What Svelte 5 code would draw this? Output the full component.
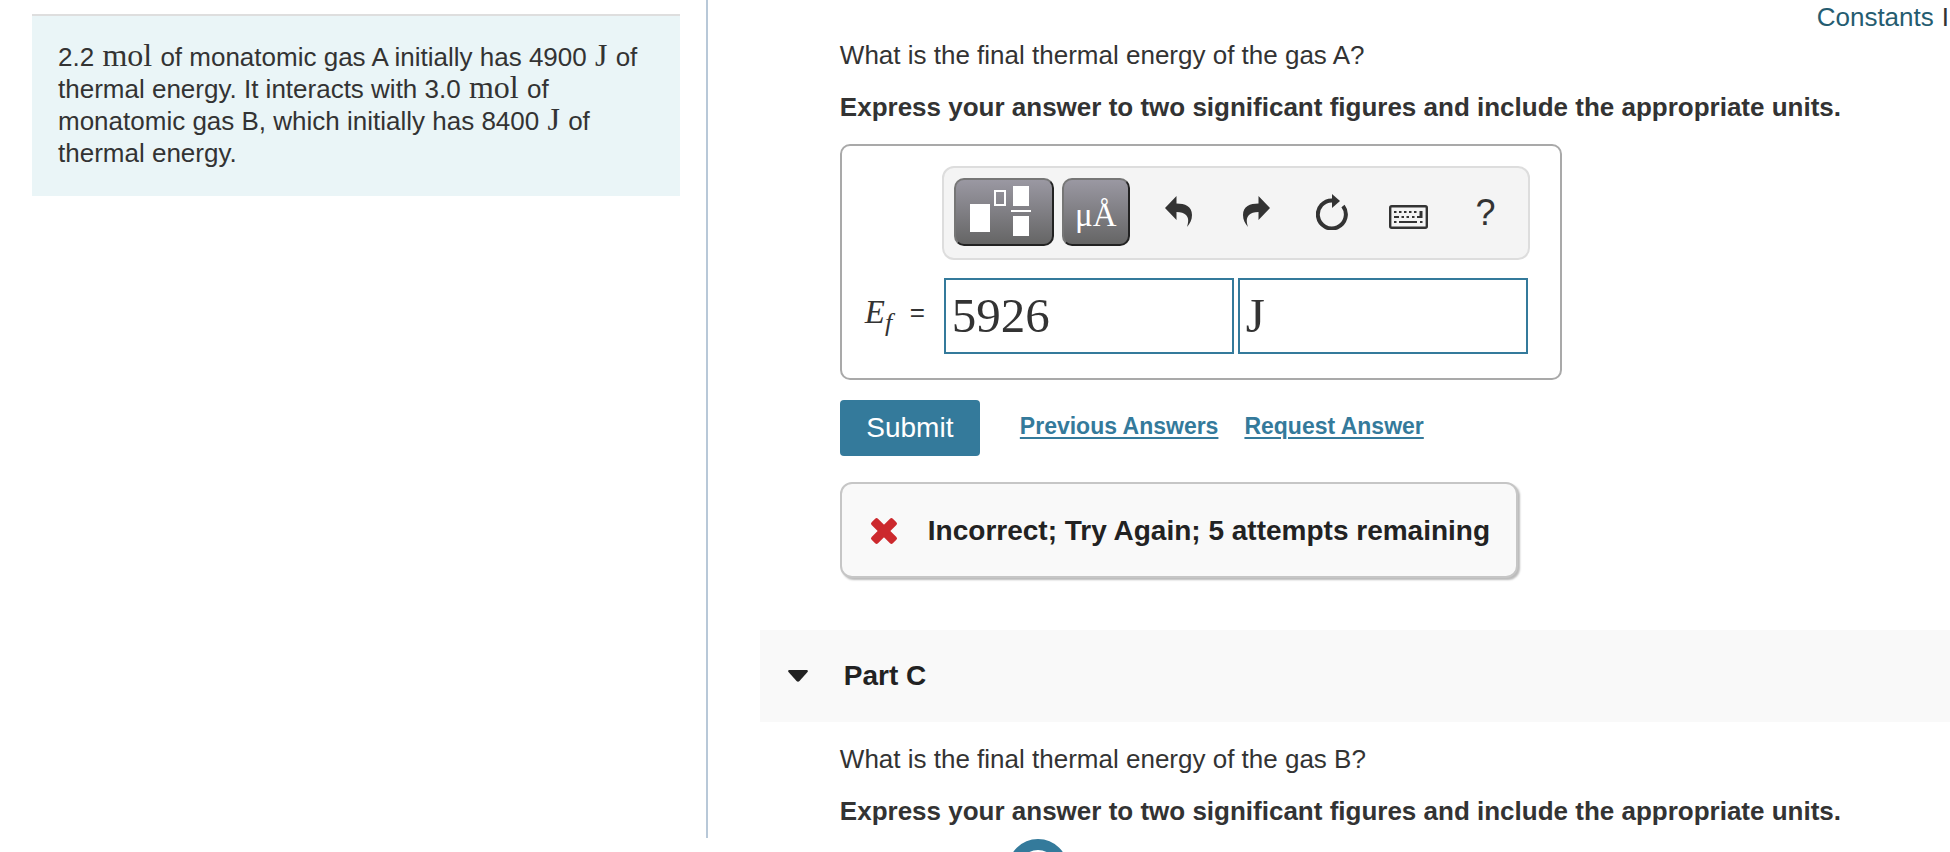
<script>
  let value = $state('5926');
  let units = $state('J');
  const instruction = 'Express your answer to two significant figures and include the appropriate units.';
</script>

<main class="page">
  <aside class="side">
    <p class="problem">
      2.2 <span class="math">mol</span> of monatomic gas A initially has 4900 <span class="math">J</span> of
      thermal energy. It interacts with 3.0 <span class="math">mol</span> of monatomic gas B, which
      initially has 8400 <span class="math">J</span> of thermal energy.
    </p>
  </aside>

  <section class="work">
    <nav class="top"><a href="#constants">Constants</a><span>I</span></nav>

    <div class="part">
      <p>What is the final thermal energy of the gas A?</p>
      <p class="strong">{instruction}</p>

      <form class="answer" onsubmit={(e) => e.preventDefault()}>
        <div class="toolbar">
          <button type="button" class="key wide" aria-label="Templates">
            <svg width="96" height="64" viewBox="0 0 96 64">
              <path fill="#fff" d="M14 24h20v28H14zM57 6h16v20H57zM55 30h20v2H55zM57 36h16v20H57z" />
              <path fill="none" stroke="#fff" stroke-width="2" d="M39 11h10v14H39z" />
            </svg>
          </button>
          <button type="button" class="key units">μÅ</button>
          <div class="tools">
            <button type="button" class="tool" aria-label="Undo">
              <svg width="28" height="32" viewBox="0 0 28 32">
                <path fill="#333" d="M0 12 11.500 0v7.500C20 7.500 27 10 27 19c0 5-2 8-5 12 1.500-5 2-9-1-12-2-2-5-3-9.500-3v8z" />
              </svg>
            </button>
            <button type="button" class="tool" aria-label="Redo">
              <svg width="28" height="32" viewBox="0 0 28 32">
                <path fill="#333" d="M28 12 16.500 0v7.500C8 7.500 1 10 1 19c0 5 2 8 5 12-1.500-5-2-9 1-12 2-2 5-3 9.500-3v8z" />
              </svg>
            </button>
            <button type="button" class="tool" aria-label="Reset">
              <svg width="32" height="36" viewBox="0 0 32 36">
                <path fill="none" stroke="#333" stroke-width="4" d="M17 6.500A14 14 0 1 0 27 12" />
                <path fill="#333" d="m16 0 8 7-8 7z" />
              </svg>
            </button>
            <button type="button" class="tool low" aria-label="Keyboard shortcuts">
              <svg width="39" height="24" viewBox="0 0 39 24">
                <rect x="1.200" y="1.200" width="36.600" height="21.600" rx="1.500" fill="none" stroke="#333" stroke-width="2.400" />
                <path fill="#333" d="M5 6h2.500v2H5zM10 6h2.500v2H10zM15 6h2.500v2H15zM20 6h2.500v2H20zM25 6h2.500v2H25zM30.500 6h3v7H28v-2h2.500zM5 11h5v2H5zM12.500 11H15v2h-2.500zM17.500 11H20v2h-2.500zM23 11h2.500v2H23zM5 16h2.500v2H5zM10 16h18v2H10zM31 16h2.500v2H31z" />
              </svg>
            </button>
            <button type="button" class="tool help" aria-label="Help">?</button>
          </div>
        </div>
        <div class="entry">
          <label for="value"><i>E<sub>f</sub></i><span>=</span></label>
          <div class="fields">
            <input id="value" bind:value />
            <input aria-label="Units" bind:value={units} />
          </div>
        </div>
      </form>

      <div class="actions">
        <button type="button" class="submit">Submit</button>
        <a href="#previous">Previous Answers</a>
        <a href="#request">Request Answer</a>
      </div>

      <div class="feedback" role="status">
        <svg width="28" height="28" viewBox="0 0 28 28" aria-hidden="true">
          <g fill="#cc292d" transform="rotate(45 14 14)">
            <rect x="-1" y="9.500" width="30" height="9" rx="2" />
            <rect x="9.500" y="-1" width="9" height="30" rx="2" />
          </g>
        </svg>
        <span>Incorrect; Try Again; 5 attempts remaining</span>
      </div>
    </div>

    <h2 class="heading">
      <button type="button" aria-expanded="true">
        <svg width="20" height="12" viewBox="0 0 20 12" aria-hidden="true">
          <path fill="#222" d="M1 0h18q1.500.5.500 2l-8 9q-1.500 1.500-3 0l-8-9Q-.5.500 1 0z" />
        </svg>
        Part C
      </button>
    </h2>

    <div class="part next">
      <p>What is the final thermal energy of the gas B?</p>
      <p class="strong">{instruction}</p>
      <div class="loader"></div>
    </div>
  </section>
</main>

<style>
  :global(body) {
    margin: 0;
    background: #fff;
  }
  .page {
    display: grid;
    grid-template: 100vh / 36.3% 1fr;
    overflow: hidden;
    color: #333;
    font: 26px/32px 'Liberation Sans', Arial, sans-serif;
  }
  .page * {
    box-sizing: border-box;
  }
  button,
  input {
    font: inherit;
    color: inherit;
  }
  p {
    margin: 0;
  }
  .side {
    margin-bottom: 14px;
    padding: 14px 26px 0 32px;
    border-right: 2px solid #b8c8d8;
  }
  .problem {
    padding: 25px 26px 27px;
    border-top: 2px solid #dedede;
    background: #eaf5f7;
  }
  .math {
    margin: 0 1px;
    font-family: 'Liberation Serif', serif;
    font-size: 32px;
    line-height: 24px;
  }
  .work {
    padding-left: 52px;
    min-width: 0;
  }
  .top {
    display: flex;
    justify-content: flex-end;
    gap: 8px;
    padding: 1px 1px 6px 0;
  }
  .top a {
    color: #255c70;
    text-decoration: none;
  }
  .part {
    padding-left: 80px;
  }
  .strong {
    margin-top: 20px;
    font-weight: bold;
  }
  .answer {
    width: 722px;
    margin-top: 21px;
    padding: 20px 30px 24px 20px;
    border: 2px solid #a9a9a9;
    border-radius: 10px;
  }
  .toolbar {
    display: flex;
    align-items: center;
    gap: 8px;
    margin-left: 80px;
    padding: 10px 4px 12px 10px;
    border: 2px solid #ddd;
    border-radius: 12px;
    background: #f4f4f4;
  }
  .key {
    width: 68px;
    height: 68px;
    padding: 0;
    border: 2px solid;
    border-color: #767676 #222 #222 #767676;
    border-radius: 10px;
    background: linear-gradient(#9a98a2, #656565);
    color: #fff;
  }
  .wide {
    width: 100px;
  }
  .key svg,
  .tool svg {
    display: block;
  }
  .units {
    padding-top: 6px;
    font-family: 'Liberation Serif', serif;
    font-size: 33px;
  }
  .tools {
    display: flex;
    flex: 1;
    padding-left: 3px;
  }
  .tool {
    display: flex;
    flex: 1;
    align-items: center;
    justify-content: center;
    height: 68px;
    padding: 0;
    border: 0;
    background: none;
  }
  .low {
    padding-top: 10px;
  }
  .help {
    padding-top: 2px;
    font-size: 36px;
  }
  .entry {
    display: flex;
    align-items: center;
    margin-top: 18px;
  }
  .entry label {
    display: flex;
    flex: none;
    justify-content: space-between;
    width: 82px;
    padding: 0 19px 8px 3px;
  }
  .entry i {
    font-family: 'Liberation Serif', serif;
    font-size: 33px;
  }
  .entry sub {
    font-size: 26px;
    line-height: 0;
  }
  .fields {
    display: flex;
    flex: 1;
    gap: 4px;
    min-width: 0;
    margin-right: 2px;
  }
  .fields input {
    flex: 1;
    min-width: 0;
    height: 76px;
    padding: 0 6px 2px;
    border: 2px solid #347a9b;
    border-radius: 0;
    background: #fff;
    font-family: 'Liberation Serif', serif;
    font-size: 49px;
  }
  .actions {
    display: flex;
    align-items: center;
    margin-top: 20px;
  }
  .submit {
    width: 140px;
    height: 56px;
    margin-right: 40px;
    padding: 0;
    border: 0;
    border-radius: 4px;
    background: #347a9b;
    color: #fff;
    font-size: 28px;
  }
  .actions a {
    margin-right: 26px;
    padding-bottom: 4px;
    color: #347a9b;
    font-size: 23px;
    font-weight: bold;
    text-decoration-thickness: 2px;
    text-underline-offset: 3px;
  }
  .feedback {
    display: inline-flex;
    align-items: center;
    gap: 30px;
    height: 96px;
    margin-top: 26px;
    padding: 4px 26px 2px 28px;
    border: 2px solid #c6c6c6;
    border-radius: 12px;
    background: #f9f9f9;
    box-shadow: 2px 2px 2px #bbb;
    color: #222;
    font-size: 28px;
    font-weight: bold;
  }
  .heading {
    margin: 52px 0 0;
    background: #f9f9f9;
    font-size: 28px;
  }
  .heading button {
    display: flex;
    align-items: center;
    gap: 36px;
    width: 100%;
    height: 92px;
    padding: 0 28px;
    border: 0;
    background: none;
    color: #222;
  }
  .next {
    padding-top: 21px;
  }
  .loader {
    width: 60px;
    height: 60px;
    margin: 12px 0 0 168px;
    border: 11px solid #347a9b;
    border-radius: 50%;
  }
</style>
